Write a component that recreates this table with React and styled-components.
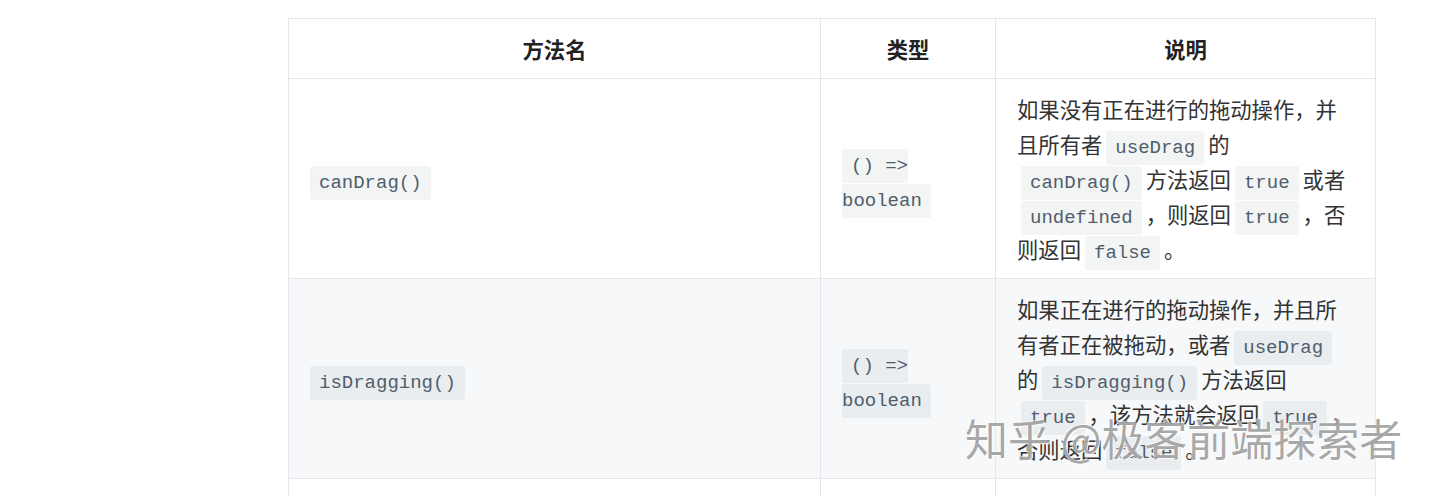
import React from "react";
import styled, { createGlobalStyle } from "styled-components";

const GlobalStyle = createGlobalStyle`
  html, body {
    margin: 0;
    padding: 0;
    background: #ffffff;
  }
  body {
    font-family: "Noto Sans CJK SC", "Noto Sans", sans-serif;
    color: #333333;
  }
`;

const Page = styled.div`
  position: relative;
  height: 496px;
  overflow: hidden;
  padding: 18px 0 0 288px;
  box-sizing: border-box;
`;

const Table = styled.table`
  border-collapse: collapse;
  table-layout: fixed;
  width: 1087px;
  font-size: 21.33px;
  line-height: 35px;
`;

const HeadCell = styled.th`
  padding: 12px 21px;
  border: 1px solid #e4e6e9;
  font-weight: 700;
  color: #222222;
  text-align: center;
  background: #ffffff;
`;

const Row = styled.tr`
  background: ${(p) => (p.$striped ? "#f6f8fa" : "#ffffff")};
`;

const Cell = styled.td`
  padding: 12px 21px;
  border: 1px solid #e4e6e9;
  vertical-align: middle;
  text-align: left;
  color: #333333;
`;

const Code = styled.code`
  font-family: "Liberation Mono", "DejaVu Sans Mono", monospace;
  font-size: 19px;
  line-height: 1;
  color: #4f5e6d;
  background: rgba(27, 31, 35, 0.05);
  border-radius: 3px;
  padding: 6px 9px;
  margin: ${(p) => (p.$spaced ? "0 4px" : "0")};
`;

const Watermark = styled.div`
  position: absolute;
  left: 965px;
  top: 413px;
  font-family: "Noto Sans CJK SC", sans-serif;
  font-size: 43px;
  line-height: 48px;
  white-space: nowrap;
  color: rgba(140, 140, 140, 0.75);
  text-shadow: 1px 1px 0 rgba(255, 255, 255, 0.85), -1px -1px 0 rgba(255, 255, 255, 0.6);
  pointer-events: none;
`;

const rows = [
  {
    name: "canDrag()",
    type: "() => boolean",
    desc: [
      "如果没有正在进行的拖动操作，并且所有者",
      { code: "useDrag" },
      "的",
      { code: "canDrag()" },
      "方法返回",
      { code: "true" },
      "或者",
      { code: "undefined" },
      "，则返回",
      { code: "true" },
      "，否则返回",
      { code: "false" },
      "。",
    ],
  },
  {
    name: "isDragging()",
    type: "() => boolean",
    striped: true,
    desc: [
      "如果正在进行的拖动操作，并且所有者正在被拖动，或者",
      { code: "useDrag" },
      "的",
      { code: "isDragging()" },
      "方法返回",
      { code: "true" },
      "，该方法就会返回",
      { code: "true" },
      "，否则返回",
      { code: "false" },
      "。",
    ],
  },
  {
    name: "getItemType()",
    type: "() => Identifier | null",
    desc: [
      "返回标识当前拖动项类型的字符串或",
      { code: "Symbol" },
      "，若没有则返回",
      { code: "null" },
      "。",
    ],
  },
];

export default function App() {
  return (
    <>
      <GlobalStyle />
      <Page>
        <Table>
          <colgroup>
            <col style={{ width: 532 }} />
            <col style={{ width: 175 }} />
            <col style={{ width: 380 }} />
          </colgroup>
          <thead>
            <tr>
              <HeadCell>方法名</HeadCell>
              <HeadCell>类型</HeadCell>
              <HeadCell>说明</HeadCell>
            </tr>
          </thead>
          <tbody>
            {rows.map((r) => (
              <Row key={r.name} $striped={r.striped}>
                <Cell>
                  <Code>{r.name}</Code>
                </Cell>
                <Cell>
                  <Code>{r.type}</Code>
                </Cell>
                <Cell>
                  {r.desc.map((s, i) =>
                    typeof s === "string" ? (
                      <React.Fragment key={i}>{s}</React.Fragment>
                    ) : (
                      <Code key={i} $spaced>
                        {s.code}
                      </Code>
                    )
                  )}
                </Cell>
              </Row>
            ))}
          </tbody>
        </Table>
        <Watermark>知乎 @极客前端探索者</Watermark>
      </Page>
    </>
  );
}
